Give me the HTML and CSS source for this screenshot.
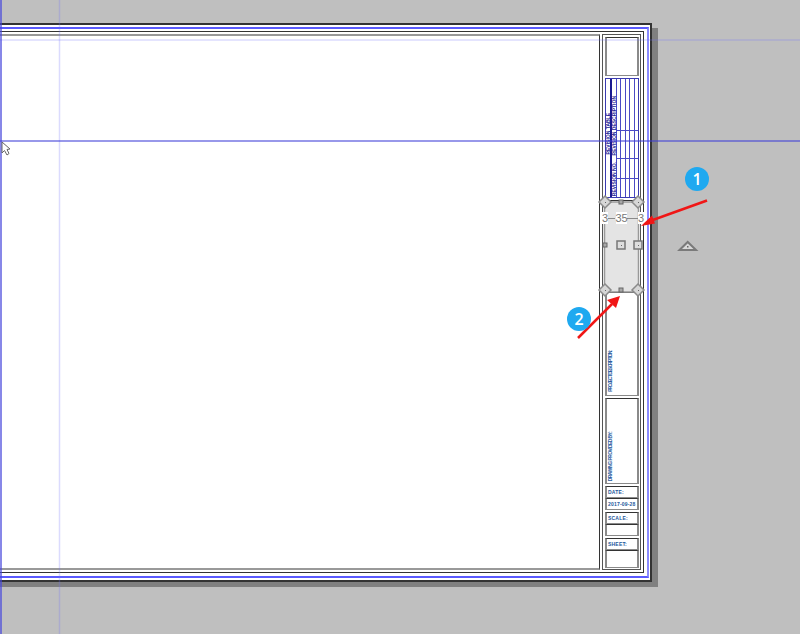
FILE: index.html
```html
<!DOCTYPE html>
<html lang="en">
<head>
<meta charset="utf-8">
<title>Title block layout</title>
<link rel="stylesheet" href="styles.css">
</head>
<body>
<main class="canvas">
  <section class="sheet">
    <div class="blue-frame">
      <div class="frame">
        <div class="drawing"></div>
        <aside class="title-block">
          <div class="cell logo"></div>
          <div class="cell rev-table">
            <div class="rev-col rev-col-a"><span class="vtext navy">REVISION TABLE</span></div>
            <div class="rev-col rev-col-b"><span class="vtext navy">REVISION NO.</span><span class="vtext navy">REVISION DESCRIPTION</span></div>
            <div class="rev-grid">
              <i></i><i></i><i></i><i></i><i></i>
              <i></i><i></i><i></i><i></i><i></i>
              <i></i><i></i><i></i><i></i><i></i>
              <i></i><i></i><i></i><i></i><i></i>
            </div>
          </div>
          <div class="cell selected"><span class="vtext faint">DRAWN BY:</span></div>
          <div class="cell project"><span class="vtext">PROJECT DESCRIPTION:</span></div>
          <div class="cell provided"><span class="vtext">DRAWING PROVIDED BY:</span></div>
          <div class="pair">
            <div class="cell row-sm"><span class="label">DATE:</span></div>
            <div class="cell row-sm"><span class="label">2017-09-28</span></div>
          </div>
          <div class="pair">
            <div class="cell row-sm"><span class="label">SCALE:</span></div>
            <div class="cell row-sm"></div>
          </div>
          <div class="pair">
            <div class="cell row-sm"><span class="label">SHEET:</span></div>
            <div class="cell row-lg"></div>
          </div>
        </aside>
      </div>
    </div>
  </section>

  <svg class="overlay" width="800" height="634" viewBox="0 0 800 634" aria-label="Annotations">
    <g class="guides">
      <line class="guide-faint" x1="0" y1="40" x2="800" y2="40"/>
      <line class="guide-faint" x1="59.5" y1="0" x2="59.5" y2="634"/>
      <line class="guide-strong" x1="1" y1="0" x2="1" y2="634"/>
      <line class="guide-main" x1="0" y1="141" x2="800" y2="141"/>
    </g>

    <path class="cursor" d="M2 142 L2 153 L4.5 150.5 L7 155 L9 153.5 L7 149.5 L10 149 Z"/>

    <rect class="sel-box" x="604.5" y="202" width="34" height="90"/>
    <g class="dims">
      <line x1="608" y1="218.5" x2="615" y2="218.5"/>
      <line x1="627" y1="218.5" x2="638" y2="218.5"/>
      <rect class="dim-bg" x="616" y="212" width="11" height="12"/>
      <rect class="dim-bg" x="602" y="212" width="6" height="12"/>
      <rect class="dim-bg" x="638" y="212" width="6" height="12"/>
      <text x="621.5" y="222" text-anchor="middle">35</text>
      <text x="605" y="222" text-anchor="middle">3</text>
      <text x="641" y="222" text-anchor="middle">3</text>
    </g>
    <g class="handles">
      <path class="diamond" d="M605 196 L611 202 L605 208 L599 202 Z"/>
      <path class="diamond" d="M638 196 L644 202 L638 208 L632 202 Z"/>
      <path class="diamond" d="M605 284 L611 290 L605 296 L599 290 Z"/>
      <path class="diamond" d="M638 284 L644 290 L638 296 L632 290 Z"/>
      <rect class="small" x="619" y="200" width="4" height="4"/>
      <rect class="small" x="619" y="288" width="4" height="4"/>
      <rect class="small" x="603" y="243" width="4" height="4"/>
      <rect class="big" x="617" y="241" width="8" height="8"/>
      <rect class="big" x="634" y="241" width="8" height="8"/>
      <rect class="dot" x="605" y="202" width="1" height="1"/>
      <rect class="dot" x="638" y="202" width="1" height="1"/>
      <rect class="dot" x="605" y="290" width="1" height="1"/>
      <rect class="dot" x="638" y="290" width="1" height="1"/>
      <rect class="dot" x="621" y="245" width="1" height="1"/>
      <rect class="dot" x="638" y="245" width="1" height="1"/>
    </g>

    <path class="tri" d="M679.5 250 L687.7 242 L696 250 Z"/>
    <rect class="dot" x="687" y="246" width="1.5" height="1.5"/>

    <g class="arrows">
      <line x1="707" y1="200.5" x2="650" y2="221"/>
      <path d="M641 226 L652 215.5 L655 223.5 Z"/>
      <line x1="578" y1="338" x2="612" y2="304"/>
      <path d="M620 296 L616 308 L607 300 Z"/>
    </g>

    <g class="badge">
      <circle cx="697" cy="179" r="12"/>
      <text x="697" y="184.5" text-anchor="middle">1</text>
      <circle cx="579" cy="319" r="12"/>
      <text x="579" y="324.5" text-anchor="middle">2</text>
    </g>
  </svg>
</main>
</body>
</html>
```

FILE: styles.css
```css
* { box-sizing: border-box; }
html, body { margin: 0; padding: 0; }
body { background: #bfbfbf; overflow: hidden; }

.canvas {
  position: relative;
  width: 800px;
  height: 634px;
  overflow: hidden;
  background: #bfbfbf;
}

.sheet {
  position: absolute;
  left: -20px;
  top: 23px;
  width: 672px;
  height: 559px;
  background: #fff;
  border: 2px solid #333;
  padding: 2px 1px 2px 0;
  box-shadow: 6px 5px 0 #808080;
}

.blue-frame {
  height: 100%;
  border: 2px solid #5a5aff;
  border-right-color: #8a8aff;
  padding: 2px 3px 3px 2px;
}

.frame {
  display: flex;
  gap: 2px;
  height: 100%;
  border: 1px solid #333;
  padding: 2px;
}

.drawing {
  flex: 1;
  border: 1px solid #333;
  border-top: 2px solid #999;
  border-bottom: 2px solid #999;
}

.title-block {
  display: flex;
  flex-direction: column;
  gap: 2px;
  width: 39px;
  border: 1px solid #555;
  padding: 2px 1px 0 2px;
  font: bold 5px "Liberation Sans", sans-serif;
  color: #24589c;
}

.cell {
  display: flex;
  align-items: flex-end;
  flex: none;
  border: 2px solid #8a8a8a;
  border-top: 1px solid #333;
  border-bottom-width: 1px;
  background: #fff;
}

.logo { height: 39px; }

.rev-table {
  height: 120px;
  border: 1px solid #3a3ab0;
  align-items: stretch;
}

.rev-col {
  display: flex;
  flex-direction: column-reverse;
  align-items: center;
  justify-content: flex-start;
  gap: 6px;
  flex: none;
}
.rev-col-a { width: 4px; padding-bottom: 42px; }
.rev-col-b { width: 6px; border-left: 2px solid #1a1a90; padding-bottom: 1px; }

.rev-grid {
  flex: 1;
  display: grid;
  grid-template-columns: repeat(5, 1fr);
  grid-template-rows: 52px 28px 20px 1fr;
}
.rev-grid i {
  border-left: 1px solid #4a4ac4;
  border-bottom: 1px solid #4a4ac4;
}
.rev-grid i:nth-last-child(-n+5) { border-bottom: 0; }

.selected { height: 90px; }
.project { height: 104px; }
.provided { height: 86px; }

.vtext {
  writing-mode: vertical-rl;
  transform: rotate(180deg);
  white-space: nowrap;
  line-height: 5px;
}
.project .vtext, .provided .vtext, .selected .vtext {
  margin: 0 0 2px 1px;
}
.project .vtext { letter-spacing: -1px; margin-bottom: 3px; }
.provided .vtext { letter-spacing: -.6px; }
.navy { color: #1a1a90; }
.faint { color: #b4c4de; font-size: 4px; }

.pair { display: flex; flex-direction: column; flex: none; }

.row-sm {
  height: 12px;
  align-items: center;
}
.row-lg { height: 18px; }

.label {
  padding-left: 1px;
  line-height: 8px;
  letter-spacing: .2px;
  white-space: nowrap;
}

.overlay {
  position: absolute;
  left: 0;
  top: 0;
}

.guide-faint { stroke: rgba(110,110,250,.25); stroke-width: 1.5; }
.guide-strong { stroke: rgba(70,70,220,.65); stroke-width: 2; }
.guide-main { stroke: rgba(60,60,215,.7); stroke-width: 1.5; }

.cursor { fill: #fff; stroke: #666; stroke-width: 1; }

.sel-box { fill: #e4e4e4; stroke: #999; stroke-width: 1.5; }

.dims line { stroke: #8a8a8a; stroke-width: 1; }
.dim-bg { fill: #fff; }
.dims text { font: 11px "Liberation Sans", sans-serif; fill: #777; }

.diamond { fill: #d6d6d6; stroke: #8a8a8a; stroke-width: 1.5; }
.small { fill: #a8a8a8; stroke: #666; stroke-width: 1; }
.big { fill: #dedede; stroke: #777; stroke-width: 1.5; }
.dot { fill: #666; }

.tri { fill: #d8d8d8; stroke: #7a7a7a; stroke-width: 2; }

.arrows line { stroke: #f01616; stroke-width: 2.5; }
.arrows path { fill: #f01616; }

.badge circle { fill: #1fa9f0; }
.badge text { font: 600 16px "Open Sans", sans-serif; fill: #fff; }
```
